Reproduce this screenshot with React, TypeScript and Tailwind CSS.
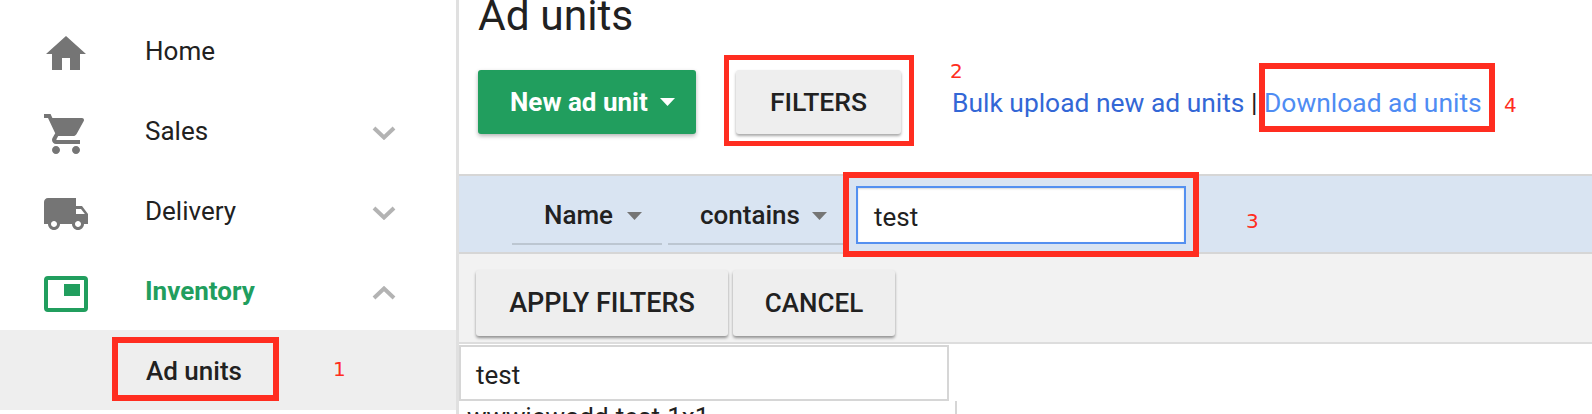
const font = "font-['Roboto',sans-serif]";

const HomeIcon = () => (
  <svg width="48" height="48" viewBox="0 0 24 24" fill="#757575" className="mt-2 shrink-0">
    <path d="M10 20v-6h4v6h5v-8h3L12 3 2 12h3v8z" />
  </svg>
);

const CartIcon = () => (
  <svg width="48" height="48" viewBox="0 0 24 24" fill="#757575" className="mt-2 shrink-0">
    <path d="M7 18c-1.1 0-1.99.9-1.99 2S5.9 22 7 22s2-.9 2-2-.9-2-2-2zM1 2v2h2l3.6 7.59-1.35 2.45c-.16.28-.25.61-.25.96 0 1.1.9 2 2 2h12v-2H7.42c-.14 0-.25-.11-.25-.25l.03-.12.9-1.63h7.45c.75 0 1.41-.41 1.75-1.03l3.58-6.47c.08-.14.12-.31.12-.48 0-.55-.45-1-1-1H5.21l-.94-2H1zm16 16c-1.1 0-1.99.9-1.99 2s.89 2 1.99 2 2-.9 2-2-.9-2-2-2z" />
  </svg>
);

const TruckIcon = () => (
  <svg width="48" height="48" viewBox="0 0 24 24" fill="#757575" className="mt-2 shrink-0">
    <path d="M20 8h-3V4H3c-1.1 0-2 .9-2 2v11h2c0 1.66 1.34 3 3 3s3-1.34 3-3h6c0 1.66 1.34 3 3 3s3-1.34 3-3h2v-5l-3-4zM6 18.5c-.83 0-1.5-.67-1.5-1.5s.67-1.5 1.5-1.5 1.5.67 1.5 1.5-.67 1.5-1.5 1.5zm13.5-9l1.96 2.5H17V9.5h2.5zm-1.5 9c-.83 0-1.5-.67-1.5-1.5s.67-1.5 1.5-1.5 1.5.67 1.5 1.5-.67 1.5-1.5 1.5z" />
  </svg>
);

const InventoryIcon = () => (
  <svg width="48" height="48" viewBox="0 0 48 48" className="mt-2 shrink-0">
    <rect x="4" y="8" width="40" height="32" rx="2" fill="none" stroke="#219e5e" strokeWidth="4" />
    <rect x="22" y="14" width="16" height="12" fill="#219e5e" />
  </svg>
);

const Chevron = ({ up }: { up?: boolean }) => (
  <svg width="24" height="14" viewBox="0 0 24 14" className="ml-auto mr-[60px] mt-[5px] shrink-0">
    <polyline
      points={up ? "2,12 12,2.5 22,12" : "2,2 12,11.5 22,2"}
      fill="none"
      stroke="#b3b3b3"
      strokeWidth="4"
    />
  </svg>
);

const Caret = ({ color }: { color: string }) => (
  <svg width="15" height="8" viewBox="0 0 15 8" className="shrink-0">
    <polygon points="0,0 15,0 7.5,8" fill={color} />
  </svg>
);

const navItems = [
  { label: "Home", icon: <HomeIcon /> },
  { label: "Sales", icon: <CartIcon />, chevron: <Chevron /> },
  { label: "Delivery", icon: <TruckIcon />, chevron: <Chevron /> },
];

const App = () => {
  return (
    <div className={`relative flex h-[414px] w-[1592px] overflow-hidden bg-white text-[#212121] ${font}`}>
      {/* Sidebar */}
      <div className="w-[459px] shrink-0 border-r-[3px] border-[#e0e0e0] pt-[10px]">
        {navItems.map((item) => (
          <div key={item.label} className="flex h-20 items-center pl-[42px]">
            {item.icon}
            <span className="ml-[55px] mt-[2px] text-[26px]">{item.label}</span>
            {item.chevron}
          </div>
        ))}
        <div className="flex h-20 items-center pl-[42px]">
          <InventoryIcon />
          <span className="ml-[55px] mt-[2px] text-[26px] font-bold text-[#219e5e]">Inventory</span>
          <Chevron up />
        </div>
        <div className="flex h-20 items-center bg-[#eeeeee] pl-[146px] pt-[2px] text-[26px] font-medium">Ad units</div>
      </div>

      {/* Main */}
      <div className="min-w-0 flex-1">
        <div className="h-[180px] pl-[19px]">
          <h1 className="mt-[-6px] h-[44px] text-[42.5px] font-normal leading-[44px]">Ad units</h1>
          <div className="mt-8 flex items-center">
            <button className="flex h-16 w-[218px] items-center gap-[12px] rounded-[3px] bg-[#219e5e] pl-[32px] text-[26px] font-bold text-white shadow-[0_2px_4px_rgba(0,0,0,0.3)]">
              New ad unit
              <Caret color="#ffffff" />
            </button>
            <button className="ml-10 h-16 w-[165px] rounded-[3px] bg-[#eeeeee] text-[26.5px] font-medium shadow-[0_2px_3px_rgba(0,0,0,0.35)]">
              FILTERS
            </button>
            <div className="ml-[51px] mt-1 flex whitespace-pre text-[26.4px]">
              <span className="text-[#3367d6]">Bulk upload new ad units</span>
              <span> | </span>
              <span className="text-[#4f8cf3]">Download ad units</span>
            </div>
          </div>
        </div>

        {/* Filter bar */}
        <div className="flex h-20 items-start border-y-2 border-[#d6d6d6] bg-[#d9e4f2] pl-[53px] pt-[10px]">
          <div className="flex h-[59px] w-[150px] items-center gap-[14px] border-b-2 border-[#bcc6d1] pl-8 pt-[2px] text-[26px] font-medium">
            Name
            <Caret color="#757575" />
          </div>
          <div className="ml-[6px] flex h-[59px] w-[180px] items-center gap-[12px] border-b-2 border-[#bcc6d1] pl-8 pt-[2px] text-[26px] font-medium">
            contains
            <Caret color="#757575" />
          </div>
          <div className="ml-2 flex h-[58px] w-[330px] items-center border-2 border-[#5490f0] bg-white pl-4 pt-[4px] text-[26px] shadow-[inset_0_1px_2px_rgba(0,0,0,0.15)]">
            test
          </div>
        </div>

        <div className="flex h-[90px] items-start gap-[5px] border-b-2 border-[#dddddd] bg-[#f2f2f2] pl-[17px] pt-4">
          <button className="h-[66px] w-[252px] rounded-[3px] bg-[#eeeeee] text-[27px] font-medium shadow-[0_2px_3px_rgba(0,0,0,0.4)]">
            APPLY FILTERS
          </button>
          <button className="h-[66px] w-[162px] rounded-[3px] bg-[#eeeeee] text-[26px] font-medium shadow-[0_2px_3px_rgba(0,0,0,0.4)]">
            CANCEL
          </button>
        </div>

        {/* Autocomplete */}
        <div className="mt-px flex h-14 w-[490px] items-center border-2 border-[#d6d6d6] pl-[15px] pt-[5px] text-[26px]">test</div>
        <div className="h-10 w-[498px] border-r-2 border-[#d6d6d6] pl-2 pt-[2px] text-[26px] leading-[28px]">
          wwwjewadd-test-1x1
        </div>
      </div>

      {/* Annotations */}
      <div className="absolute left-[112px] top-[337px] h-[64px] w-[167px] border-[6px] border-[#ff2d20]" />
      <div className="absolute left-[724px] top-[55px] h-[91px] w-[190px] border-[5px] border-[#ff2d20]" />
      <div className="absolute left-[843px] top-[172px] h-[85px] w-[356px] border-[6px] border-[#ff2d20]" />
      <div className="absolute left-[1259px] top-[63px] h-[69px] w-[236px] border-[6px] border-[#ff2d20]" />
      <span className="absolute left-[333px] top-[357px] font-['DejaVu_Sans',sans-serif] text-[20px] leading-6 text-[#ff2d20]">1</span>
      <span className="absolute left-[950px] top-[59px] font-['DejaVu_Sans',sans-serif] text-[20px] leading-6 text-[#ff2d20]">2</span>
      <span className="absolute left-[1246px] top-[209px] font-['DejaVu_Sans',sans-serif] text-[20px] leading-6 text-[#ff2d20]">3</span>
      <span className="absolute left-[1504px] top-[93px] font-['DejaVu_Sans',sans-serif] text-[20px] leading-6 text-[#ff2d20]">4</span>
    </div>
  );
};

export default App;
